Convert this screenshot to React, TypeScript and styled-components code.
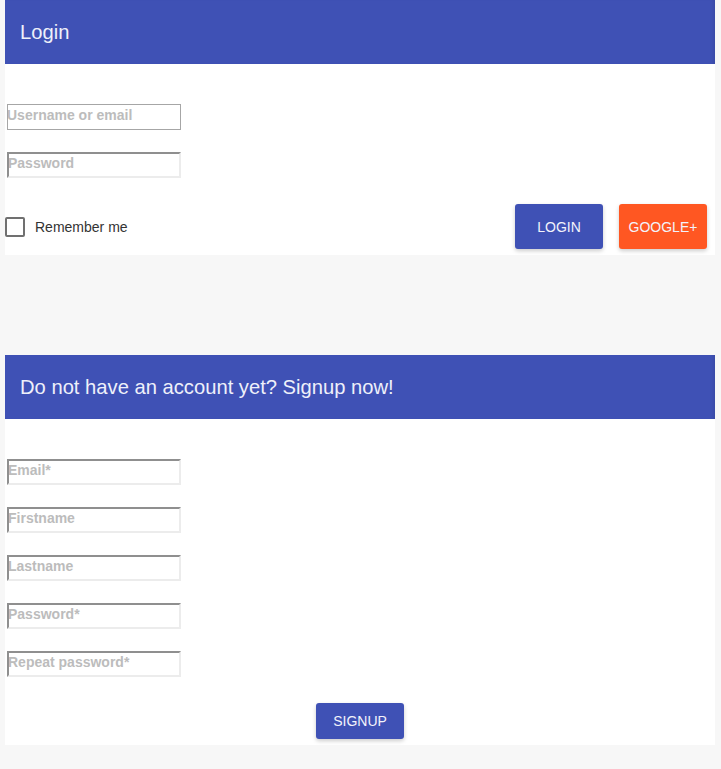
import React from "react";
import styled, { createGlobalStyle } from "styled-components";

const Global = createGlobalStyle`
  html, body { margin: 0; padding: 0; background: #f7f7f7; }
  body { font-family: "Liberation Sans", Arial, sans-serif; }
  * { box-sizing: border-box; }
`;

const Page = styled.div`
  display: flex;
  flex-direction: column;
  gap: 100px;
  padding: 0 6px 24px 5px;
`;

const Card = styled.section`
  background: #fff;
  display: flex;
  flex-direction: column;
`;

const Header = styled.div`
  background: #3f51b5;
  height: 64px;
  display: flex;
  align-items: center;
  padding-left: 15px;
  color: #eef0fa;
  font-size: 20.2px;
  box-shadow: inset -4px 0 4px -3px rgba(0, 0, 0, 0.12);
`;

const Body = styled.div<{ $bottom: number }>`
  display: flex;
  flex-direction: column;
  padding: 40px 0 ${(p) => p.$bottom}px 0;
`;

const Field = styled.input<{ $flat?: boolean }>`
  width: 174px;
  height: 26px;
  margin: 0 0 22px 2px;
  padding: 0 0 4px 0;
  text-indent: -1px;
  font-family: "Liberation Sans", Arial, sans-serif;
  font-size: 14px;
  font-weight: bold;
  background: #fff;
  border-style: solid;
  border-width: ${(p) => (p.$flat ? "1px" : "2px")};
  border-color: ${(p) =>
    p.$flat ? "#a6a6a6" : "#8f8f8f #ececec #ececec #8f8f8f"};
  outline: none;
  &::placeholder { color: #bcbcbc; }
`;

const Row = styled.div`
  display: flex;
  align-items: center;
  margin-top: 4px;
`;

const Remember = styled.label`
  display: flex;
  align-items: center;
  gap: 10px;
  font-size: 14px;
  color: #333;
  flex: 1;
`;

const Box = styled.span`
  width: 20px;
  height: 20px;
  border: 2px solid #707070;
  border-radius: 2px;
  display: inline-block;
`;

const Buttons = styled.div`
  display: flex;
  gap: 16px;
  margin-right: 8px;
`;

const Button = styled.button<{ $color: string; $h: number }>`
  width: 88px;
  height: ${(p) => p.$h}px;
  border: none;
  border-radius: 3px;
  background: ${(p) => p.$color};
  color: #f3f3fb;
  font-family: "Liberation Sans", Arial, sans-serif;
  font-size: 14px;
  text-transform: uppercase;
  padding: 0;
  box-shadow: 0 2px 4px rgba(0, 0, 0, 0.2);
`;

const Center = styled.div`
  display: flex;
  justify-content: center;
  margin-top: 4px;
`;

export default function App() {
  return (
    <>
      <Global />
      <Page>
        <Card>
          <Header>Login</Header>
          <Body $bottom={6}>
            <Field $flat placeholder="Username or email" />
            <Field type="password" placeholder="Password" />
            <Row>
              <Remember>
                <Box />
                Remember me
              </Remember>
              <Buttons>
                <Button $color="#3f51b5" $h={45}>Login</Button>
                <Button $color="#ff5722" $h={45}>Google+</Button>
              </Buttons>
            </Row>
          </Body>
        </Card>
        <Card>
          <Header>Do not have an account yet? Signup now!</Header>
          <Body $bottom={6}>
            <Field placeholder="Email*" />
            <Field placeholder="Firstname" />
            <Field placeholder="Lastname" />
            <Field type="password" placeholder="Password*" />
            <Field type="password" placeholder="Repeat password*" />
            <Center>
              <Button $color="#3f51b5" $h={36}>Signup</Button>
            </Center>
          </Body>
        </Card>
      </Page>
    </>
  );
}
